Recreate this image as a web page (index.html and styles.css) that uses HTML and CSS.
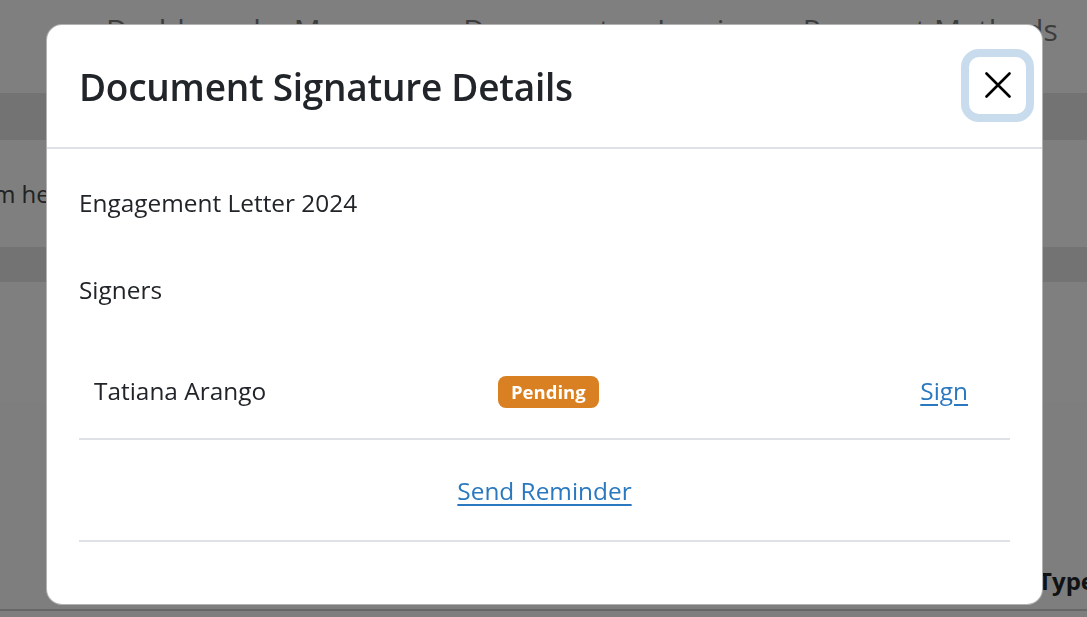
FILE: index.html
```html
<!DOCTYPE html>
<html lang="en">
<head>
<meta charset="utf-8">
<title>Document Signature Details</title>
<link rel="stylesheet" href="styles.css">
</head>
<body>
<div class="page">
  <nav class="topnav">
    <a class="nav-link">Dashboard</a>
    <a class="nav-link">Messages</a>
    <a class="nav-link">Documents</a>
    <a class="nav-link">Invoices</a>
    <a class="nav-link">Payment Methods</a>
  </nav>
  <div class="band"></div>
  <section class="intro"><p class="intro-text">You can manage all your documents from here</p></section>
  <div class="band band-2"></div>
  <section class="blank"></section>
  <section class="table-area">
    <div class="th-row"><span class="th">Type</span></div>
  </section>
</div>

<div class="backdrop"></div>

<div class="modal" role="dialog" aria-labelledby="modal-title">
  <header class="modal-header">
    <h5 class="modal-title" id="modal-title">Document Signature Details</h5>
    <button class="btn-close" type="button" aria-label="Close">
      <svg viewBox="0 0 26 26" width="26" height="26"><path d="M1.5 1.5 L24.5 24.5 M24.5 1.5 L1.5 24.5" stroke="#000" stroke-width="2.6" stroke-linecap="round" fill="none"/></svg>
    </button>
  </header>
  <div class="modal-body">
    <p class="doc-name">Engagement Letter 2024</p>
    <p class="signers-label">Signers</p>
    <div class="signer-row">
      <span class="signer-name">Tatiana Arango</span>
      <span class="signer-status"><span class="badge">Pending</span></span>
      <span class="signer-action"><a class="link" href="#">Sign</a></span>
    </div>
    <div class="reminder-row">
      <a class="link" href="#">Send Reminder</a>
    </div>
  </div>
</div>
</body>
</html>
```

FILE: styles.css
```css
html, body {
  margin: 0;
  padding: 0;
}
body {
  font-family: "Open Sans", "Noto Sans", sans-serif;
  color: #212529;
  background: #fff;
  width: 1087px;
  height: 617px;
  overflow: hidden;
}
.page {
  display: flex;
  flex-direction: column;
  height: 617px;
}
.topnav {
  height: 93px;
  display: flex;
  align-items: flex-start;
  gap: 33px;
  padding: 9px 0 0 106px;
  box-sizing: border-box;
  white-space: nowrap;
}
.nav-link {
  font-size: 30px;
  color: #7b7b7b;
  text-decoration: none;
}
.band {
  height: 47px;
  background: #e6e6e6;
}
.band-2 {
  height: 35px;
}
.intro {
  height: 107px;
  display: flex;
  align-items: center;
  overflow: hidden;
}
.intro-text {
  margin: 0;
  font-size: 24px;
  white-space: nowrap;
  margin-left: -451px;
  color: #444;
}
.blank {
  height: 120px;
}
.table-area {
  flex: 1;
  display: flex;
  flex-direction: column;
  justify-content: flex-end;
  background: #fdfdfd;
}
.th-row {
  display: flex;
  justify-content: flex-end;
  border-bottom: 2px solid #cfcfcf;
  padding-bottom: 12px;
  margin-bottom: 6px;
}
.th {
  font-weight: 700;
  font-size: 24px;
  margin-right: -8px;
  color: #212529;
}
.backdrop {
  position: fixed;
  inset: 0;
  background: rgba(0, 0, 0, 0.5);
}
.modal {
  position: fixed;
  left: 46px;
  top: 24px;
  width: 997px;
  height: 581px;
  box-sizing: border-box;
  background: #fff;
  border: 1px solid rgba(0, 0, 0, 0.3);
  border-radius: 16px;
  display: flex;
  flex-direction: column;
  overflow: hidden;
}
.modal-header {
  height: 124px;
  box-sizing: border-box;
  display: flex;
  align-items: center;
  justify-content: space-between;
  padding: 0 16px 0 32px;
  border-bottom: 2px solid #dee2e6;
}
.modal-title {
  margin: 0;
  font-size: 37px;
  font-weight: 600;
  color: #212529;
  letter-spacing: -0.25px;
}
.btn-close {
  width: 57px;
  height: 57px;
  margin-top: -2px;
  padding: 0;
  border: none;
  background: #fff;
  border-radius: 10px;
  box-shadow: 0 0 0 8px #c8dcee;
  display: flex;
  align-items: center;
  justify-content: center;
  cursor: pointer;
}
.modal-body {
  padding: 36px 32px 0 32px;
}
.doc-name,
.signers-label {
  margin: 0;
  font-size: 24.4px;
  line-height: 36px;
}
.signers-label {
  margin-top: 51px;
}
.signer-row {
  margin-top: 34px;
  height: 96px;
  display: flex;
  align-items: center;
  border-bottom: 2px solid #dee2e6;
  font-size: 24.4px;
}
.signer-name {
  width: 404px;
  padding-left: 15px;
}
.signer-status {
  flex: 1;
}
.signer-action {
  padding-right: 42px;
}
.badge {
  display: inline-block;
  background: #d98022;
  color: #fff;
  font-weight: 700;
  font-size: 18.5px;
  line-height: 32px;
  height: 32px;
  padding: 0 13px;
  border-radius: 8px;
}
.link {
  color: #2a78bf;
  text-decoration: underline;
  text-underline-offset: 4px;
  font-size: 24.4px;
}
.reminder-row {
  height: 100px;
  display: flex;
  align-items: center;
  justify-content: center;
  border-bottom: 2px solid #dee2e6;
}
```
